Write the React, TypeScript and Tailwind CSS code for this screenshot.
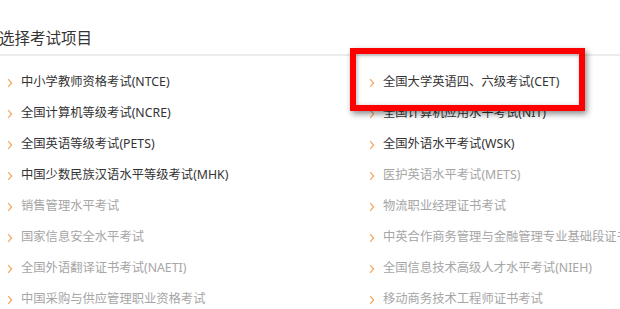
const left = [
  { t: "中小学教师资格考试(NTCE)", on: true },
  { t: "全国计算机等级考试(NCRE)", on: true },
  { t: "全国英语等级考试(PETS)", on: true },
  { t: "中国少数民族汉语水平等级考试(MHK)", on: true },
  { t: "销售管理水平考试", on: false },
  { t: "国家信息安全水平考试", on: false },
  { t: "全国外语翻译证书考试(NAETI)", on: false },
  { t: "中国采购与供应管理职业资格考试", on: false },
];

const right = [
  { t: "全国大学英语四、六级考试(CET)", on: true },
  { t: "全国计算机应用水平考试(NIT)", on: true },
  { t: "全国外语水平考试(WSK)", on: true },
  { t: "医护英语水平考试(METS)", on: false },
  { t: "物流职业经理证书考试", on: false },
  { t: "中英合作商务管理与金融管理专业基础段证书考试", on: false },
  { t: "全国信息技术高级人才水平考试(NIEH)", on: false },
  { t: "移动商务技术工程师证书考试", on: false },
];

function Chevron() {
  return (
    <svg width="6" height="10" viewBox="0 0 6 10" className="shrink-0">
      <path d="M1.2 1.2 L4.6 5 L1.2 8.8" fill="none" stroke="#f3a45a" strokeWidth="1.2" />
    </svg>
  );
}

function Item({ t, on }: { t: string; on: boolean }) {
  return (
    <li className="h-[31px] flex items-center gap-[8px] pl-[7px] whitespace-nowrap overflow-hidden">
      <Chevron />
      <span className={on ? "text-[#333]" : "text-[#a6a6a6]"}>{t}</span>
    </li>
  );
}

export default function App() {
  return (
    <div
      className="relative w-[620px] h-[309px] bg-white overflow-hidden"
      style={{ fontFamily: '"Noto Sans", "Noto Sans CJK SC", sans-serif' }}
    >
      <div className="h-[54px] pt-[22px] flex items-center">
        <h2 className="text-[15.5px] leading-[20px] text-[#333] -ml-[1px]">选择考试项目</h2>
      </div>
      <div className="h-[2px] bg-[#ececec]" />
      <div className="grid grid-cols-[362px_1fr] pt-[11px] text-[12.3px]">
        <ul>
          {left.map((x) => (
            <Item key={x.t} {...x} />
          ))}
        </ul>
        <ul className="overflow-hidden">
          {right.map((x) => (
            <Item key={x.t} {...x} />
          ))}
        </ul>
      </div>
      <div className="absolute left-[350px] top-[48px] w-[235px] h-[63px] border-[6px] border-[#ff0000] shadow-[2px_3px_6px_rgba(0,0,0,0.45),inset_1px_1px_4px_rgba(0,0,0,0.3)]" />
    </div>
  );
}
